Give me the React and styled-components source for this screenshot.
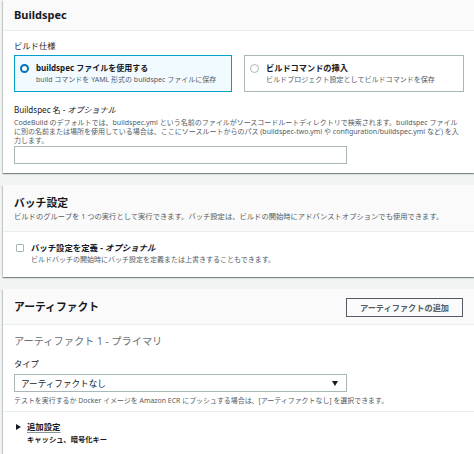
import React from "react";
import styled, { createGlobalStyle } from "styled-components";

const Global = createGlobalStyle`
	html, body {
		margin: 0;
		padding: 0;
		background: #f2f3f3;
		overflow: hidden;
	}
	body {
		font-family: "Noto Sans", "Noto Sans CJK JP", sans-serif;
		color: #16191f;
	}
`;

export default function App(){
	return (
		<Page>
			<Global />
			<Card>
				<Header $h={31}>
					<Title $size={11}>Buildspec</Title>
				</Header>
				<Body>
					<Label>ビルド仕様</Label>
					<Tiles>
						<Tile $selected>
							<Radio $selected />
							<div>
								<TileTitle $size={8}>buildspec ファイルを使用する</TileTitle>
								<TileSub $size={7}>build コマンドを YAML 形式の buildspec ファイルに保存</TileSub>
							</div>
						</Tile>
						<Tile>
							<Radio />
							<div>
								<TileTitle $size={8.2}>ビルドコマンドの挿入</TileTitle>
								<TileSub $size={7.05}>ビルドプロジェクト設定としてビルドコマンドを保存</TileSub>
							</div>
						</Tile>
					</Tiles>
					<Label $size={8.05}>Buildspec 名 - <em>オプショナル</em></Label>
					<Desc $size={7}>
						CodeBuild のデフォルトでは、buildspec.yml という名前のファイルがソースコードルートディレクトリで検索されます。buildspec ファイルに別の名前または場所を使用している場合は、ここにソースルートからのパス (buildspec-two.yml や configuration/buildspec.yml など) を入力します。
					</Desc>
					<Input />
				</Body>
			</Card>

			<Card>
				<Header $h={47}>
					<Title $size={10.8}>バッチ設定</Title>
					<HeaderDesc>ビルドのグループを 1 つの実行として実行できます。バッチ設定は、ビルドの開始時にアドバンストオプションでも使用できます。</HeaderDesc>
				</Header>
				<CheckRow>
					<Checkbox />
					<div>
						<TileTitle $size={8.4}>バッチ設定を定義 - <em>オプショナル</em></TileTitle>
						<TileSub $size={7}>ビルドバッチの開始時にバッチ設定を定義または上書きすることもできます。</TileSub>
					</div>
				</CheckRow>
			</Card>

			<Card>
				<Header $h={36} $row>
					<Title $size={10.8}>アーティファクト</Title>
					<Button>アーティファクトの追加</Button>
				</Header>
				<Body $top={8}>
					<SubHead>アーティファクト 1 - プライマリ</SubHead>
					<Label>タイプ</Label>
					<Select>
						<span>アーティファクトなし</span>
						<Caret />
					</Select>
					<Desc $size={6.95}>テストを実行するか Docker イメージを Amazon ECR にプッシュする場合は、[アーティファクトなし] を選択できます。</Desc>
				</Body>
				<Expander>
					<ExpTitle><Tri />追加設定</ExpTitle>
					<ExpSub>キャッシュ、暗号化キー</ExpSub>
				</Expander>
			</Card>
		</Page>
	)
}

const Page = styled.div`
	padding-left: 3px;
	width: 471px;
	display: flex;
	flex-direction: column;
	gap: 12px;
`;

const Card = styled.section`
	background: #ffffff;
	box-shadow: 0 1px 1px 0 rgba(0, 28, 36, 0.3), 1px 1px 1px 0 rgba(0, 28, 36, 0.15), -1px 1px 1px 0 rgba(0, 28, 36, 0.15);
`;

const Header = styled.div`
	box-sizing: border-box;
	min-height: ${p => p.$h}px;
	background: #fafafa;
	border-bottom: 1px solid #eaeded;
	padding: 0 11px 0 11px;
	display: flex;
	flex-direction: ${p => p.$row ? "row" : "column"};
	justify-content: ${p => p.$row ? "space-between" : "center"};
	align-items: ${p => p.$row ? "center" : "flex-start"};
`;

const Title = styled.div`
	font-size: ${p => p.$size}px;
	font-weight: 700;
	line-height: 16px;
`;

const HeaderDesc = styled.div`
	font-size: 7.3px;
	line-height: 11px;
	color: #545b64;
`;

const Body = styled.div`
	padding: ${p => p.$top || 9}px 11px 6px;
`;

const Label = styled.div`
	font-size: ${p => p.$size || 8.3}px;
	line-height: 12px;
	margin-bottom: 3px;
	em {
		font-style: italic;
	}
`;

const Tiles = styled.div`
	display: grid;
	grid-template-columns: 218px 220px;
	gap: 12px;
	margin-bottom: 12px;
`;

const Tile = styled.div`
	box-sizing: border-box;
	height: 37px;
	border: 1px solid ${p => p.$selected ? "#00a1c9" : "#aab7b8"};
	background: ${p => p.$selected ? "#f1faff" : "#ffffff"};
	display: flex;
	align-items: flex-start;
	gap: 7px;
	padding: 6px 5px;
`;

const Radio = styled.span`
	box-sizing: border-box;
	flex: none;
	width: 9px;
	height: 9px;
	margin-top: 2px;
	border-radius: 50%;
	border: ${p => p.$selected ? "2.5px solid #0073bb" : "1px solid #aab7b8"};
	background: #fff;
`;

const TileTitle = styled.div`
	font-size: ${p => p.$size}px;
	font-weight: 700;
	line-height: 12px;
	white-space: nowrap;
	em {
		font-style: italic;
	}
`;

const TileSub = styled.div`
	font-size: ${p => p.$size}px;
	line-height: 11px;
	color: #545b64;
	white-space: nowrap;
`;

const Desc = styled.div`
	font-size: ${p => p.$size}px;
	line-height: 9px;
	color: #545b64;
	margin-top: -1px;
`;

const Input = styled.div`
	box-sizing: border-box;
	width: 333px;
	height: 18px;
	border: 1px solid #aab7b8;
	margin: 1px 0 3px;
`;

const CheckRow = styled.div`
	display: flex;
	gap: 7px;
	padding: 10px 11px 12px 13px;
`;

const Checkbox = styled.span`
	box-sizing: border-box;
	flex: none;
	width: 8px;
	height: 8px;
	margin-top: 2px;
	border: 1px solid #aab7b8;
	border-radius: 1px;
`;

const Button = styled.div`
	box-sizing: border-box;
	height: 19px;
	width: 117px;
	border: 1px solid #545b64;
	display: flex;
	align-items: center;
	justify-content: center;
	font-size: 8.2px;
	font-weight: 700;
	color: #545b64;
	margin-top: 1px;
`;

const SubHead = styled.div`
	font-size: 10.2px;
	line-height: 16px;
	color: #687078;
	margin: 0 0 9px;
`;

const Select = styled.div`
	box-sizing: border-box;
	width: 333px;
	height: 18px;
	border: 1px solid #aab7b8;
	display: flex;
	align-items: center;
	justify-content: space-between;
	padding: 0 8px 0 6px;
	font-size: 8.6px;
	margin: 4px 0 5px;
`;

const Caret = styled.span`
	width: 0;
	height: 0;
	border-left: 3.5px solid transparent;
	border-right: 3.5px solid transparent;
	border-top: 5px solid #16191f;
`;

const Expander = styled.div`
	border-top: 1px solid #eaeded;
	padding: 9px 11px 12px 13px;
`;

const ExpTitle = styled.div`
	display: flex;
	align-items: center;
	gap: 6px;
	font-size: 8.4px;
	font-weight: 700;
	line-height: 12px;
	color: #16191f;
	text-decoration: underline;
	text-decoration-color: #879596;
	text-underline-offset: 2px;
`;

const Tri = styled.span`
	width: 0;
	height: 0;
	border-top: 3.5px solid transparent;
	border-bottom: 3.5px solid transparent;
	border-left: 5px solid #16191f;
`;

const ExpSub = styled.div`
	font-size: 7.3px;
	font-weight: 700;
	line-height: 12px;
	color: #16191f;
	padding-left: 11px;
`;
